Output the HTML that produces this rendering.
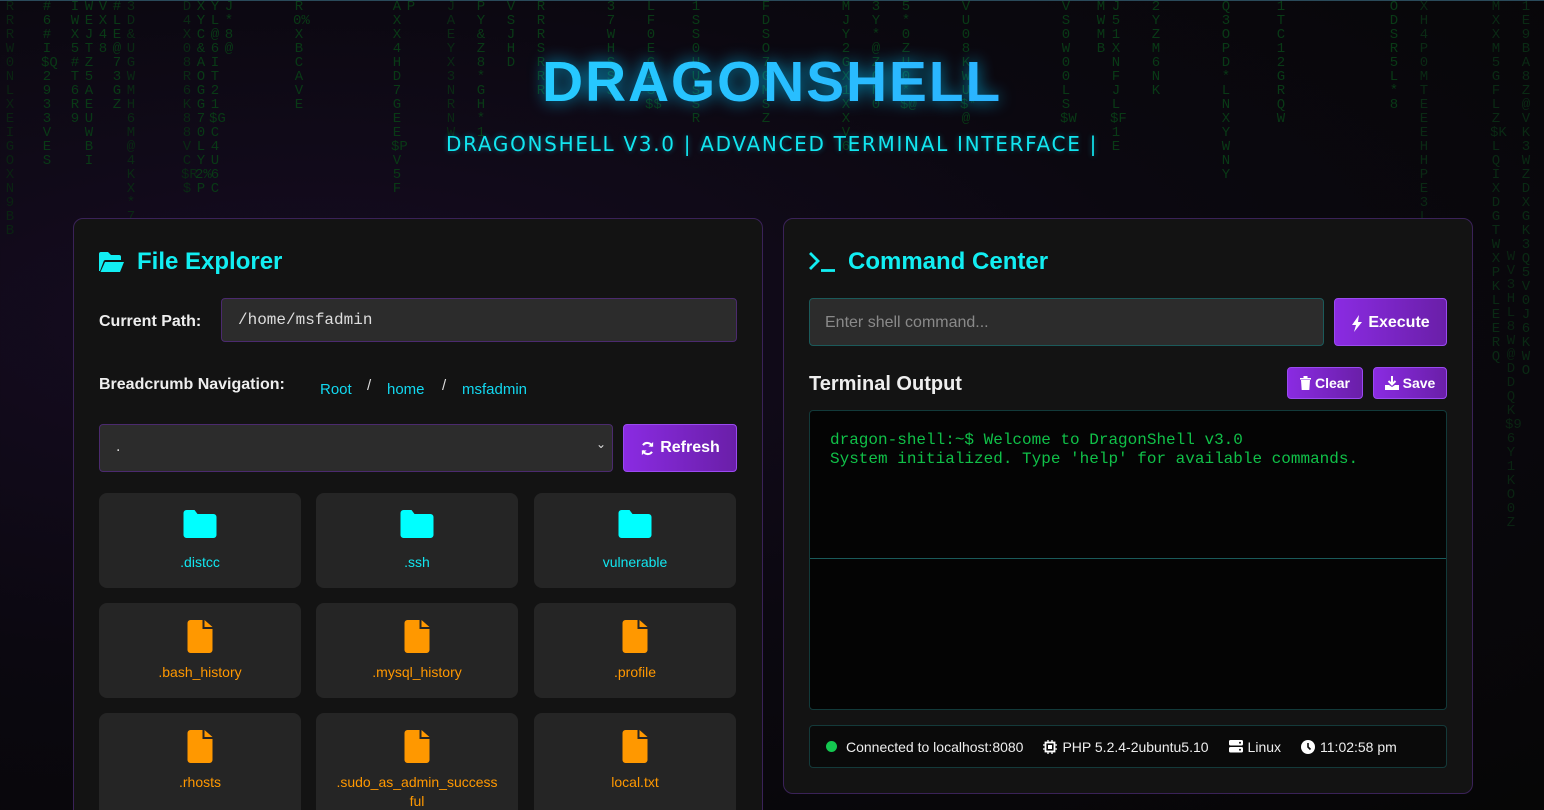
<!DOCTYPE html>
<html><head><meta charset="utf-8"><style>
*{box-sizing:border-box;margin:0;padding:0}
html,body{width:1544px;height:810px;overflow:hidden}
body{background:radial-gradient(ellipse at 20% 40%,#160c22 0%,#0b0810 50%,#060606 100%);font-family:"Liberation Sans",sans-serif;position:relative}
.topline{position:absolute;left:0;top:0;width:100%;height:1px;background:#2a4a5a}
.col{position:absolute;top:0;width:12px;font:14px/14px "Liberation Mono",monospace;word-break:break-all;color:#093a16;text-align:center}
h1{position:absolute;left:0;width:100%;top:47px;text-align:center;font:bold 57px/70px "Liberation Sans",sans-serif;letter-spacing:1.8px;color:#1fd8ff;background:linear-gradient(90deg,#1ee6ff,#2ea8ff 80%,#3a7cff);-webkit-background-clip:text;background-clip:text;-webkit-text-fill-color:transparent;filter:drop-shadow(0 0 8px rgba(0,200,255,.7))}
.sub{position:absolute;left:0;width:100%;top:132px;text-align:center;font:20px "DejaVu Sans",sans-serif;letter-spacing:1.7px;color:#12e6f0;text-shadow:0 0 6px rgba(0,230,255,.4)}
.panel{position:absolute;top:218px;width:690px;background:#131313;border:1px solid #3a2258;border-radius:10px}
.ptitle{position:absolute;top:248px;font:bold 24px "Liberation Sans",sans-serif;color:#12eef2;display:flex;align-items:center;gap:12px}
.lbl{position:absolute;font:bold 16px "Liberation Sans",sans-serif;color:#eee}
.inp{position:absolute;background:#2c2c2c;border:1px solid #4b2a6e;border-radius:4px}
.btn{position:absolute;background:linear-gradient(90deg,#8a2be2,#6a1fa8);border:1px solid #9a4af0;border-radius:4px;color:#fff;font:bold 16px "Liberation Sans",sans-serif;display:flex;align-items:center;justify-content:center;gap:5px}
.card{position:absolute;width:202px;height:95px;background:#252525;border-radius:8px;text-align:center;font:14px "Liberation Sans",sans-serif}
.card svg{position:absolute;left:50%;top:17px;transform:translateX(-50%)}
.card span{position:absolute;left:0;width:100%;top:60px;line-height:19px}
.cy{color:#12e6f0}.or{color:#ff9800}
.bc{position:absolute;top:381px;font:15px "Liberation Sans",sans-serif;color:#12d8f0}
.sl{position:absolute;top:377px;font:15px "Liberation Sans",sans-serif;color:#ddd}
</style></head><body>
<div class="topline"></div>
<div class="col" style="left:4px;color:#0a2412">RRRW0NLXEIGOXN9BB</div>
<div class="col" style="left:41px">#6#I$Q2933VES</div>
<div class="col" style="left:69px">IWX5#T6R9</div>
<div class="col" style="left:83px">WEJTZ5AEUWBI</div>
<div class="col" style="left:97px">VX48</div>
<div class="col" style="left:111px">#LE@73GZ</div>
<div class="col" style="left:125px;color:#0a2a14">3D&amp;UGWMH6M@4KX*7</div>
<div class="col" style="left:181px;color:#0a2a14">D4X08R6K88VC$R$</div>
<div class="col" style="left:195px">XYC&amp;AOGG70LY2%P</div>
<div class="col" style="left:209px">YL@6IT21$GC4U6C</div>
<div class="col" style="left:223px">J*8@</div>
<div class="col" style="left:293px">R0%XBCAVE</div>
<div class="col" style="left:391px">AXX4HD7GEE$PV5F</div>
<div class="col" style="left:405px">P</div>
<div class="col" style="left:445px;color:#0a2a14">JAEYX3NRNW</div>
<div class="col" style="left:475px">PY&amp;Z8*GH*1</div>
<div class="col" style="left:505px">VSJHD</div>
<div class="col" style="left:535px">RRRSRRR</div>
<div class="col" style="left:605px">37WHSS$</div>
<div class="col" style="left:645px">LF0EG4S$$</div>
<div class="col" style="left:690px">1SS0UUSSR</div>
<div class="col" style="left:760px">FDSO7GMSZ</div>
<div class="col" style="left:840px">MJY2GX1XXV6</div>
<div class="col" style="left:870px">3Y*@ZGN0</div>
<div class="col" style="left:900px">5*0ZU0*$@</div>
<div class="col" style="left:960px">VU08KWU$*@</div>
<div class="col" style="left:1060px">VS0W00LS$W</div>
<div class="col" style="left:1095px">MWMB</div>
<div class="col" style="left:1110px">J51XNFJL$F1E</div>
<div class="col" style="left:1150px">2YZM6NK</div>
<div class="col" style="left:1220px">Q3OPD*LNXYWNY</div>
<div class="col" style="left:1275px">1TC12GRQW</div>
<div class="col" style="left:1388px">ODSR5L*8</div>
<div class="col" style="left:1418px;color:#0a2a14">XH4P0MTEEEHHPE3LN0</div>
<div class="col" style="left:1490px;color:#0a2a14">MXXM5GFLZ$KLQIXDGTWXPKLEERQ</div>
<div class="col" style="left:1520px;color:#0a2a14">1E9BA8Z@VK3WZDXGK3Q5V0J6KWO</div>
<div class="col" style="left:1505px;color:#0a2412;top:250px">WV3HL8W@DDQK$96Y1KO0Z</div>

<h1>DRAGONSHELL</h1>
<div class="sub">DRAGONSHELL V3.0 | ADVANCED TERMINAL INTERFACE |</div>

<!-- Left panel -->
<div class="panel" style="left:73px;height:620px"></div>
<div class="ptitle" style="left:98px"><svg width="27" height="22" viewBox="0 0 27 22"><path d="M1 3a2 2 0 0 1 2-2h7l3 3h8a2 2 0 0 1 2 2v3H7.5a2 2 0 0 0-1.9 1.4L2 20H1z" fill="#12eef2"/><path d="M7 11h19l-4 10H2.5z" fill="#12eef2"/></svg><span>File Explorer</span></div>
<div class="lbl" style="left:99px;top:313px">Current Path:</div>
<div class="inp" style="left:221px;top:298px;width:516px;height:44px;font:16px 'Liberation Mono',monospace;color:#ddd;padding:12px 16px">/home/msfadmin</div>
<div class="lbl" style="left:99px;top:376px">Breadcrumb Navigation:</div>
<div class="bc" style="left:320px">Root</div><div class="sl" style="left:367px">/</div>
<div class="bc" style="left:387px">home</div><div class="sl" style="left:442px">/</div>
<div class="bc" style="left:462px">msfadmin</div>
<div class="inp" style="left:99px;top:424px;width:514px;height:48px;color:#ddd;font:16px 'Liberation Sans';padding:13px 16px">.<span style="position:absolute;right:6px;top:12px;font-size:12px">&#8964;</span></div>
<div class="btn" style="left:623px;top:424px;width:114px;height:48px"><svg width="15" height="15" viewBox="0 0 16 16"><path d="M13 6A5.5 5.5 0 0 0 3.2 4.5M3 10a5.5 5.5 0 0 0 9.8 1.5" stroke="#fff" stroke-width="2.2" fill="none"/><path d="M14 1v5h-5zM2 15v-5h5z" fill="#fff"/></svg>Refresh</div>

<div class="card" style="left:99px;top:493px"><svg width="33" height="28" viewBox="0 0 33 28"><path d="M0 3a3 3 0 0 1 3-3h8l3 4h16a3 3 0 0 1 3 3v18a3 3 0 0 1-3 3H3a3 3 0 0 1-3-3z" fill="#00ffff"/></svg><span class="cy">.distcc</span></div>
<div class="card" style="left:316px;top:493px"><svg width="33" height="28" viewBox="0 0 33 28"><path d="M0 3a3 3 0 0 1 3-3h8l3 4h16a3 3 0 0 1 3 3v18a3 3 0 0 1-3 3H3a3 3 0 0 1-3-3z" fill="#00ffff"/></svg><span class="cy">.ssh</span></div>
<div class="card" style="left:534px;top:493px"><svg width="33" height="28" viewBox="0 0 33 28"><path d="M0 3a3 3 0 0 1 3-3h8l3 4h16a3 3 0 0 1 3 3v18a3 3 0 0 1-3 3H3a3 3 0 0 1-3-3z" fill="#00ffff"/></svg><span class="cy">vulnerable</span></div>

<div class="card" style="left:99px;top:603px"><svg width="25" height="33" viewBox="0 0 25 33"><path d="M3 0h12v9h10v21a3 3 0 0 1-3 3H3a3 3 0 0 1-3-3V3a3 3 0 0 1 3-3z" fill="#ff9800"/><path d="M17 0l8 7h-8z" fill="#ff9800"/></svg><span class="or">.bash_history</span></div>
<div class="card" style="left:316px;top:603px"><svg width="25" height="33" viewBox="0 0 25 33"><path d="M3 0h12v9h10v21a3 3 0 0 1-3 3H3a3 3 0 0 1-3-3V3a3 3 0 0 1 3-3z" fill="#ff9800"/><path d="M17 0l8 7h-8z" fill="#ff9800"/></svg><span class="or">.mysql_history</span></div>
<div class="card" style="left:534px;top:603px"><svg width="25" height="33" viewBox="0 0 25 33"><path d="M3 0h12v9h10v21a3 3 0 0 1-3 3H3a3 3 0 0 1-3-3V3a3 3 0 0 1 3-3z" fill="#ff9800"/><path d="M17 0l8 7h-8z" fill="#ff9800"/></svg><span class="or">.profile</span></div>

<div class="card" style="left:99px;top:713px;height:110px"><svg width="25" height="33" viewBox="0 0 25 33"><path d="M3 0h12v9h10v21a3 3 0 0 1-3 3H3a3 3 0 0 1-3-3V3a3 3 0 0 1 3-3z" fill="#ff9800"/><path d="M17 0l8 7h-8z" fill="#ff9800"/></svg><span class="or">.rhosts</span></div>
<div class="card" style="left:316px;top:713px;height:110px"><svg width="25" height="33" viewBox="0 0 25 33"><path d="M3 0h12v9h10v21a3 3 0 0 1-3 3H3a3 3 0 0 1-3-3V3a3 3 0 0 1 3-3z" fill="#ff9800"/><path d="M17 0l8 7h-8z" fill="#ff9800"/></svg><span class="or">.sudo_as_admin_success<br>ful</span></div>
<div class="card" style="left:534px;top:713px;height:110px"><svg width="25" height="33" viewBox="0 0 25 33"><path d="M3 0h12v9h10v21a3 3 0 0 1-3 3H3a3 3 0 0 1-3-3V3a3 3 0 0 1 3-3z" fill="#ff9800"/><path d="M17 0l8 7h-8z" fill="#ff9800"/></svg><span class="or">local.txt</span></div>

<!-- Right panel -->
<div class="panel" style="left:783px;height:576px"></div>
<div class="ptitle" style="left:808px"><svg width="28" height="22" viewBox="0 0 28 22"><path d="M2 2l8 8-8 8" stroke="#12eef2" stroke-width="2.8" fill="none"/><path d="M13 19.5h14" stroke="#12eef2" stroke-width="2.8"/></svg><span>Command Center</span></div>
<div class="inp" style="left:809px;top:298px;width:515px;height:48px;border-color:#1b5a5a;color:#8a8a8a;font:16px 'Liberation Sans';padding:15px 15px">Enter shell command...</div>
<div class="btn" style="left:1334px;top:298px;width:113px;height:48px;padding-top:2px"><svg width="12" height="17" viewBox="0 0 12 17"><path d="M8 0L1 10h4l-2 7 8-10H7z" fill="#fff"/></svg>Execute</div>
<div class="lbl" style="left:809px;top:373px;font-size:20px">Terminal Output</div>
<div class="btn" style="left:1287px;top:367px;width:76px;height:32px;font-size:14px;gap:4px"><svg width="11" height="14" viewBox="0 0 11 14"><path d="M0 2h11v1.5H0zM3.5 0h4v2h-4zM1 4h9l-.7 10H1.7z" fill="#fff"/></svg>Clear</div>
<div class="btn" style="left:1373px;top:367px;width:74px;height:32px;font-size:14px;gap:4px"><svg width="14" height="14" viewBox="0 0 14 14"><path d="M7 0v8M3.5 5L7 8.5 10.5 5" stroke="#fff" stroke-width="2" fill="none"/><path d="M0 9h4l3 2 3-2h4v5H0z" fill="#fff"/></svg>Save</div>
<div style="position:absolute;left:809px;top:410px;width:638px;height:300px;background:#040404;border:1px solid #123a3a;border-radius:4px"></div>
<div style="position:absolute;left:810px;top:558px;width:636px;height:1px;background:#1a5a5a"></div>
<div style="position:absolute;left:830px;top:431px;font:16px/19px 'Liberation Mono',monospace;color:#10c048;white-space:pre">dragon-shell:~$ Welcome to DragonShell v3.0
System initialized. Type 'help' for available commands.</div>
<div style="position:absolute;left:809px;top:725px;width:638px;height:43px;background:#0a0a0a;border:1px solid #143a3a;border-radius:4px;font:14px 'Liberation Sans',sans-serif;color:#eee;display:flex;align-items:center;padding-left:16px">
<span style="width:11px;height:11px;border-radius:50%;background:#14c850;display:inline-block;margin-right:9px"></span>Connected to localhost:8080
<svg style="margin-left:20px;margin-right:5px" width="14" height="14" viewBox="0 0 14 14"><rect x="2.5" y="2.5" width="9" height="9" fill="none" stroke="#fff" stroke-width="1.8"/><rect x="5" y="5" width="4" height="4" fill="#fff"/><path d="M5 0v2.5M9 0v2.5M5 11.5V14M9 11.5V14M0 5h2.5M0 9h2.5M11.5 5H14M11.5 9H14" stroke="#fff" stroke-width="1.3"/></svg>PHP 5.2.4-2ubuntu5.10
<svg style="margin-left:20px;margin-right:5px" width="14" height="13" viewBox="0 0 14 13"><rect x="0" y="0" width="14" height="5.5" rx="1.5" fill="#fff"/><rect x="0" y="7" width="14" height="5.5" rx="1.5" fill="#fff"/><circle cx="11" cy="2.75" r="1" fill="#0a0a0a"/><circle cx="11" cy="9.75" r="1" fill="#0a0a0a"/></svg>Linux
<svg style="margin-left:20px;margin-right:5px" width="14" height="14" viewBox="0 0 14 14"><circle cx="7" cy="7" r="7" fill="#fff"/><path d="M7 3v4l2.5 2.5" stroke="#0a0a0a" stroke-width="1.6" fill="none"/></svg>11:02:58 pm</div>
</body></html>
